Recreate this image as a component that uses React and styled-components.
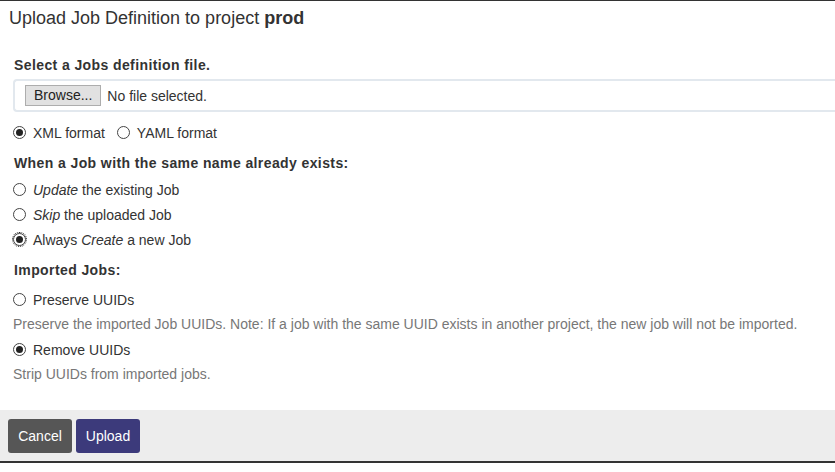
import React, { useState } from "react";
import styled, { createGlobalStyle } from "styled-components";

const GlobalStyle = createGlobalStyle`
  html, body {
    margin: 0;
    padding: 0;
    background: #fff;
  }
  body {
    font-family: "Liberation Sans", Arial, sans-serif;
    font-size: 14px;
    color: #333;
  }
`;

export default function App() {
  const [format, setFormat] = useState("xml");
  const [dupe, setDupe] = useState("create");
  const [uuid, setUuid] = useState("remove");

  return (
    <Modal>
      <GlobalStyle />
      <Header>
        <Title>
          Upload Job Definition to project <b>prod</b>
        </Title>
      </Header>
      <Body>
        <Label>Select a Jobs definition file.</Label>
        <FileBox>
          <BrowseButton type="button">Browse...</BrowseButton>
          <FileName>No file selected.</FileName>
        </FileBox>
        <InlineRow>
          <Option>
            <Radio
              name="format"
              checked={format === "xml"}
              onChange={() => setFormat("xml")}
            />
            XML format
          </Option>
          <Option>
            <Radio
              name="format"
              checked={format === "yaml"}
              onChange={() => setFormat("yaml")}
            />
            YAML format
          </Option>
        </InlineRow>

        <Label $top={9}>When a Job with the same name already exists:</Label>
        <Stack>
          <Option>
            <Radio
              name="dupe"
              checked={dupe === "update"}
              onChange={() => setDupe("update")}
            />
            <span>
              <i>Update</i> the existing Job
            </span>
          </Option>
          <Option>
            <Radio
              name="dupe"
              checked={dupe === "skip"}
              onChange={() => setDupe("skip")}
            />
            <span>
              <i>Skip</i> the uploaded Job
            </span>
          </Option>
          <Option>
            <Radio
              name="dupe"
              $focus
              checked={dupe === "create"}
              onChange={() => setDupe("create")}
            />
            <span>
              Always <i>Create</i> a new Job
            </span>
          </Option>
        </Stack>

        <Label $top={9} $bottom={8}>
          Imported Jobs:
        </Label>
        <Stack>
          <Option>
            <Radio
              name="uuid"
              checked={uuid === "preserve"}
              onChange={() => setUuid("preserve")}
            />
            Preserve UUIDs
          </Option>
          <Help>
            Preserve the imported Job UUIDs. Note: If a job with the same UUID
            exists in another project, the new job will not be imported.
          </Help>
          <Option>
            <Radio
              name="uuid"
              checked={uuid === "remove"}
              onChange={() => setUuid("remove")}
            />
            Remove UUIDs
          </Option>
          <Help>Strip UUIDs from imported jobs.</Help>
        </Stack>
      </Body>
      <Footer>
        <Button $bg="#565656">Cancel</Button>
        <Button $bg="#3c3a7b">Upload</Button>
      </Footer>
    </Modal>
  );
}

const Modal = styled.div`
  width: 835px;
  border-top: 1px solid #333;
  border-bottom: 2px solid #333;
  background: #fff;
`;

const Header = styled.div`
  padding: 6px 9px 0;
  height: 32px;
  box-sizing: border-box;
`;

const Title = styled.h4`
  margin: 0;
  font-size: 18px;
  font-weight: normal;
  line-height: 22px;
  color: #333;

  b {
    font-weight: bold;
  }
`;

const Body = styled.div`
  padding: 23px 0 0 13px;
  height: 377px;
  box-sizing: border-box;
`;

const Label = styled.div`
  font-weight: bold;
  font-size: 14px;
  letter-spacing: 0.4px;
  line-height: 18px;
  margin: ${(p) => p.$top || 0}px 0 ${(p) => p.$bottom ?? 5}px 1px;
  color: #333;
`;

const FileBox = styled.div`
  display: flex;
  align-items: center;
  gap: 6px;
  height: 33px;
  box-sizing: border-box;
  border: 2px solid #e2e8ee;
  border-right: none;
  border-radius: 4px 0 0 4px;
  padding: 0 10px;
  margin-bottom: 8px;
`;

const BrowseButton = styled.button`
  font-family: "Liberation Sans", Arial, sans-serif;
  font-size: 14px;
  color: #222;
  background: #e1e1e1;
  border: 1px solid #adadad;
  border-radius: 0;
  height: 21px;
  padding: 0 8px;
  line-height: 19px;
`;

const FileName = styled.span`
  color: #333;
  font-size: 14px;
`;

const InlineRow = styled.div`
  display: flex;
  gap: 12px;
  margin-bottom: 8px;
`;

const Stack = styled.div`
  display: flex;
  flex-direction: column;
`;

const Option = styled.label`
  display: flex;
  align-items: center;
  gap: 7px;
  height: 25px;
  line-height: 20px;
  font-size: 14px;
  color: #333;
  cursor: pointer;

  i {
    font-style: italic;
  }
`;

const Radio = styled.input.attrs({ type: "radio" })`
  appearance: none;
  margin: 0;
  width: 13px;
  height: 13px;
  border: 1px solid #444;
  border-radius: 50%;
  background: #fff;
  display: grid;
  place-content: center;
  outline: ${(p) => (p.$focus ? "1px dotted #222" : "none")};
  outline-offset: 0px;

  &:checked::before {
    content: "";
    width: 7px;
    height: 7px;
    border-radius: 50%;
    background: #222;
  }
`;

const Help = styled.div`
  color: #777;
  font-size: 14px;
  line-height: 25px;
`;

const Footer = styled.div`
  background: #ededed;
  height: 51px;
  display: flex;
  align-items: center;
  gap: 4px;
  padding: 0 8px;
`;

const Button = styled.button`
  font-family: "Liberation Sans", Arial, sans-serif;
  font-size: 14px;
  color: #fff;
  background: ${(p) => p.$bg};
  border: none;
  border-radius: 3px;
  height: 34px;
  width: 64px;
  padding: 0;
`;
